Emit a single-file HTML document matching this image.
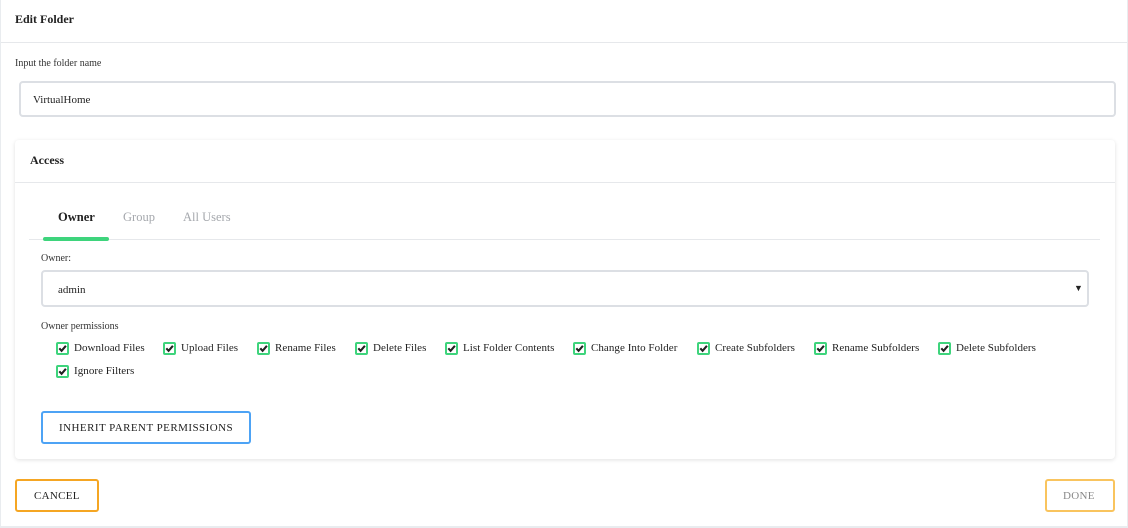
<!DOCTYPE html>
<html><head><style>
*{box-sizing:border-box;margin:0;padding:0}
body{width:1128px;height:528px;background:#e9ecef;font-family:"Liberation Serif",serif;color:#222;position:relative;overflow:hidden}
.page{position:absolute;left:1px;top:0;width:1126px;height:526px;background:#fff}
.a{position:absolute;white-space:nowrap}
.cb{position:absolute;width:13px;height:13px;border:2px solid #3ed47c;border-radius:2px;background:#fff}
.cb svg{position:absolute;left:0;top:0}
.lbl{position:absolute;font-size:11px;white-space:nowrap}
</style></head><body>
<div class="page">
<div class="a" style="left:14px;top:12px;font-size:12px;font-weight:bold">Edit Folder</div>
<div class="a" style="left:0;top:42px;width:1126px;height:1px;background:#e6e8eb"></div>
<div class="a" style="left:14px;top:58px;font-size:10px;color:#333">Input the folder name</div>
<div class="a" style="left:18px;top:81px;width:1097px;height:36px;border:2px solid #dcdfe4;border-radius:4px"></div>
<div class="a" style="left:32px;top:94px;font-size:11px">VirtualHome</div>
<div class="a" style="left:14px;top:140px;width:1100px;height:319px;border-radius:4px;box-shadow:0 1px 4px rgba(0,0,0,.12);background:#fff"></div>
<div class="a" style="left:29px;top:153px;font-size:12px;font-weight:bold">Access</div>
<div class="a" style="left:14px;top:182px;width:1100px;height:1px;background:#e6e8eb"></div>
<div class="a" style="left:57px;top:210px;font-size:12.5px;font-weight:bold">Owner</div>
<div class="a" style="left:122px;top:210px;font-size:12.5px;color:#a5a8ad">Group</div>
<div class="a" style="left:182px;top:210px;font-size:12.5px;color:#a5a8ad">All Users</div>
<div class="a" style="left:28px;top:239px;width:1071px;height:1px;background:#e6e8eb"></div>
<div class="a" style="left:42px;top:237px;width:66px;height:4px;border-radius:2px;background:#3ed47c"></div>
<div class="a" style="left:40px;top:253px;font-size:10px;color:#333">Owner:</div>
<div class="a" style="left:40px;top:270px;width:1048px;height:37px;border:2px solid #dcdfe4;border-radius:4px"></div>
<div class="a" style="left:57px;top:284px;font-size:11px">admin</div>
<div class="a" style="left:1073px;top:283px;font-size:9px">▼</div>
<div class="a" style="left:40px;top:321px;font-size:10px;color:#333">Owner permissions</div>
<div id="cbs"></div>
<div class="a" style="left:40px;top:411px;width:210px;height:33px;border:2px solid #4da3f5;border-radius:3px"></div>
<div class="a" style="left:58px;top:422px;font-size:11px;letter-spacing:0.45px">INHERIT PARENT PERMISSIONS</div>
<div class="a" style="left:14px;top:479px;width:84px;height:33px;border:2px solid #f5a623;border-radius:3px"></div>
<div class="a" style="left:33px;top:490px;font-size:11px;letter-spacing:0.3px">CANCEL</div>
<div class="a" style="left:1044px;top:479px;width:70px;height:33px;border:2px solid #f9c45e;border-radius:3px"></div>
<div class="a" style="left:1062px;top:490px;font-size:11px;color:#888;letter-spacing:0.3px">DONE</div>
</div>
<script>
var items=[[55,342,"Download Files"],[162,342,"Upload Files"],[256,342,"Rename Files"],[354,342,"Delete Files"],[444,342,"List Folder Contents"],[572,342,"Change Into Folder"],[696,342,"Create Subfolders"],[813,342,"Rename Subfolders"],[937,342,"Delete Subfolders"],[55,365,"Ignore Filters"]];
var h="";
items.forEach(function(i){
h+='<div class="cb" style="left:'+i[0]+'px;top:'+i[1]+'px"><svg width="9" height="9" viewBox="0 0 9 9"><path d="M1.3 4.3L3.6 6.8L7.9 1.8" stroke="#222" stroke-width="2.1" fill="none"/></svg></div>';
h+='<div class="lbl" style="left:'+(i[0]+18)+'px;top:'+i[1]+'px;letter-spacing:0.05px">'+i[2]+'</div>';
});
document.getElementById("cbs").innerHTML=h;
</script>
</body></html>
